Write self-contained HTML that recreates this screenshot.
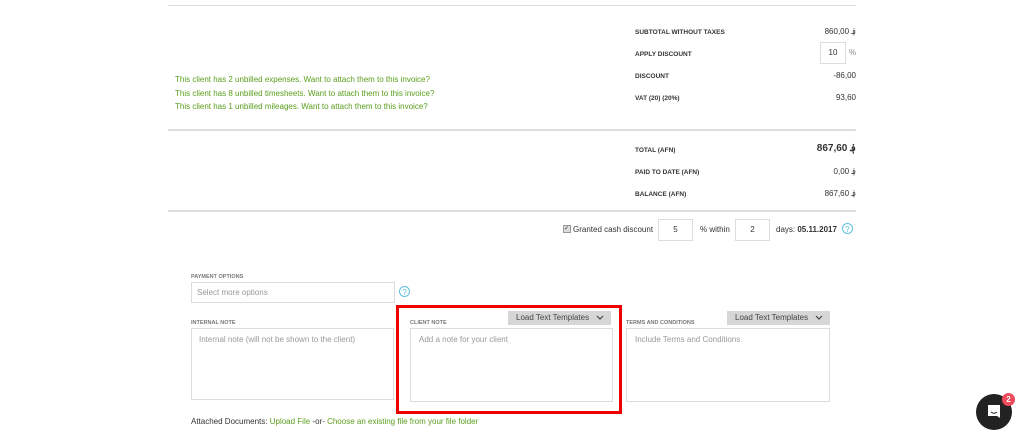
<!DOCTYPE html>
<html><head><style>
body{margin:0;width:1024px;height:444px;background:#fff;position:relative;overflow:hidden;font-family:"Liberation Sans",sans-serif;color:#333}
.a{position:absolute;white-space:nowrap}
.lbl{font-size:6.5px;font-weight:bold;color:#333}
.val{font-size:8px;color:#333;text-align:right}
.g{font-size:8px;color:#5a9e1c}
.hr{position:absolute;left:168px;width:688px;background:#ddd}
.box{position:absolute;border:1px solid #ddd;background:#fff;box-sizing:border-box}
.sl{font-size:5.5px;color:#777;font-weight:bold}
.ph{font-size:8px;color:#999}
.btn{position:absolute;background:#d6d6d6;height:14px;font-size:8px;color:#444;line-height:14px;padding-left:8px;box-sizing:border-box}
.btn svg{position:absolute;right:7px;top:4px}
.q{position:absolute;width:11px;height:11px;border:1px solid #5bc0de;border-radius:50%;color:#5bc0de;font-size:8px;line-height:11px;text-align:center;box-sizing:border-box}
</style></head><body>
<div class="hr" style="top:5px;height:1px"></div>
<div class="hr" style="top:129px;height:2px"></div>
<div class="hr" style="top:210px;height:2px"></div>

<div class="a lbl" style="left:635px;top:29px">SUBTOTAL WITHOUT TAXES</div>
<div class="a val" style="right:168px;top:27px">860,00 ؋</div>
<div class="a lbl" style="left:635px;top:51px">APPLY DISCOUNT</div>
<div class="box" style="left:820px;top:42px;width:26px;height:22px;font-size:8px;line-height:20px;text-align:center">10</div>
<div class="a val" style="left:849px;top:48px;color:#888">%</div>
<div class="a lbl" style="left:635px;top:73px">DISCOUNT</div>
<div class="a val" style="right:168px;top:71px">-86,00</div>
<div class="a lbl" style="left:635px;top:95px">VAT (20) (20%)</div>
<div class="a val" style="right:168px;top:93px">93,60</div>

<div class="a g" style="left:175px;top:75px">This client has 2 unbilled expenses. Want to attach them to this invoice?</div>
<div class="a g" style="left:175px;top:89px">This client has 8 unbilled timesheets. Want to attach them to this invoice?</div>
<div class="a g" style="left:175px;top:102px">This client has 1 unbilled mileages. Want to attach them to this invoice?</div>

<div class="a lbl" style="left:635px;top:147px">TOTAL (AFN)</div>
<div class="a val" style="right:168px;top:143px;font-size:10px;font-weight:bold">867,60 ؋</div>
<div class="a lbl" style="left:635px;top:169px">PAID TO DATE (AFN)</div>
<div class="a val" style="right:168px;top:167px">0,00 ؋</div>
<div class="a lbl" style="left:635px;top:191px">BALANCE (AFN)</div>
<div class="a val" style="right:168px;top:189px">867,60 ؋</div>

<div class="a" style="left:563px;top:225px;width:6px;height:6px;border:1px solid #999;background:#ddd;font-size:6px;line-height:6px">✓</div>
<div class="a" style="left:573px;top:225px;font-size:8px">Granted cash discount</div>
<div class="box" style="left:658px;top:219px;width:35px;height:22px;font-size:8px;line-height:20px;text-align:center">5</div>
<div class="a" style="left:700px;top:225px;font-size:8px">% within</div>
<div class="box" style="left:735px;top:219px;width:35px;height:22px;font-size:8px;line-height:20px;text-align:center">2</div>
<div class="a" style="left:776px;top:225px;font-size:8px">days: <b>05.11.2017</b></div>
<div class="q" style="left:842px;top:223px">?</div>

<div class="a sl" style="left:191px;top:274px">PAYMENT OPTIONS</div>
<div class="box" style="left:191px;top:282px;width:204px;height:21px"><span class="a ph" style="left:5px;top:5px">Select more options</span></div>
<div class="q" style="left:399px;top:286px">?</div>

<div class="a sl" style="left:191px;top:320px">INTERNAL NOTE</div>
<div class="box" style="left:191px;top:328px;width:203px;height:72px"><span class="a ph" style="left:7px;top:6px">Internal note (will not be shown to the client)</span></div>

<div class="a" style="left:396px;top:305px;width:220px;height:103px;border:3px solid #e00"></div>
<div class="a sl" style="left:410px;top:320px">CLIENT NOTE</div>
<div class="btn" style="left:508px;top:311px;width:103px">Load Text Templates<svg width="8" height="6" viewBox="0 0 8 6"><path d="M1 1L4 4L7 1" stroke="#444" stroke-width="1.2" fill="none"/></svg></div>
<div class="box" style="left:410px;top:328px;width:203px;height:74px"><span class="a ph" style="left:8px;top:6px">Add a note for your client</span></div>

<div class="a sl" style="left:626px;top:320px">TERMS AND CONDITIONS</div>
<div class="btn" style="left:727px;top:311px;width:103px">Load Text Templates<svg width="8" height="6" viewBox="0 0 8 6"><path d="M1 1L4 4L7 1" stroke="#444" stroke-width="1.2" fill="none"/></svg></div>
<div class="box" style="left:626px;top:328px;width:204px;height:74px"><span class="a ph" style="left:8px;top:6px">Include Terms and Conditions</span></div>

<div class="a" style="left:191px;top:417px;font-size:8px">Attached Documents: <span style="color:#5a9e1c">Upload File</span> -or- <span style="color:#5a9e1c">Choose an existing file from your file folder</span></div>

<div class="a" style="left:976px;top:394px;width:36px;height:36px;border-radius:50%;background:#222"></div>
<svg class="a" style="left:985px;top:403px" width="18" height="18" viewBox="0 0 18 18"><path d="M3 2H15V15L12 13H3Z" fill="#fff"/><path d="M6 9Q9 11.5 12 9" stroke="#222" stroke-width="1" fill="none"/></svg>
<div class="a" style="left:1002px;top:393px;width:13px;height:13px;border-radius:50%;background:#f04b5a;color:#fff;font-size:8px;line-height:13px;text-align:center;font-weight:bold">2</div>
</body></html>
